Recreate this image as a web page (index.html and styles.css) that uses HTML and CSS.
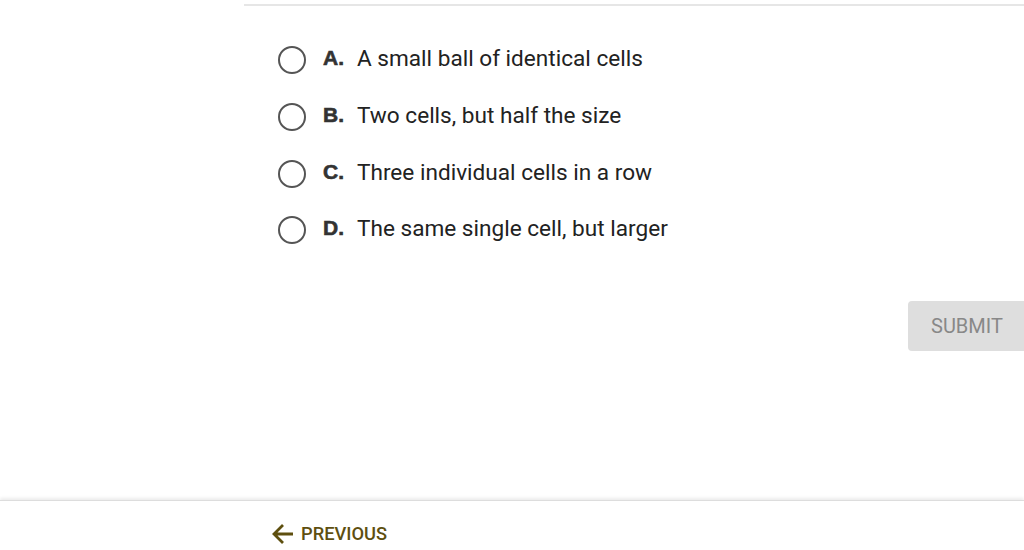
FILE: index.html
```html
<!DOCTYPE html>
<html lang="en">
<head>
    <meta charset="UTF-8">
    <title>Question</title>
    <link rel="stylesheet" href="styles.css">
</head>
<body>
<div class="page">
    <div class="question">
        <div class="rule"></div>
        <ul class="choices">
            <li class="choice"><span class="radio"></span><b class="letter">A.</b><span class="text">A small ball of identical cells</span></li>
            <li class="choice"><span class="radio"></span><b class="letter">B.</b><span class="text">Two cells, but half the size</span></li>
            <li class="choice"><span class="radio"></span><b class="letter">C.</b><span class="text">Three individual cells in a row</span></li>
            <li class="choice"><span class="radio"></span><b class="letter">D.</b><span class="text">The same single cell, but larger</span></li>
        </ul>
        <div class="actions">
            <button class="submit" disabled>SUBMIT</button>
        </div>
    </div>
    <div class="footer">
        <a class="prev" href="#">
            <svg width="24" height="24" viewBox="0 0 24 24"><path d="M22 12H3M12 3l-9 9 9 9" fill="none" stroke="#5e4f0f" stroke-width="2.8"/></svg>
            <span>PREVIOUS</span>
        </a>
    </div>
</div>
</body>
</html>
```

FILE: styles.css
```css
html, body {
    margin: 0;
    padding: 0;
}

body {
    background: #fff;
    font-family: Roboto, "Liberation Sans", Arial, sans-serif;
    color: #222;
}

.page {
    width: 1024px;
    height: 550px;
    display: flex;
    flex-direction: column;
    overflow: hidden;
}

.question {
    height: 500px;
    padding-left: 244px;
    display: flex;
    flex-direction: column;
}

.rule {
    margin-top: 4px;
    height: 2px;
    background: #e6e6e6;
}

.choices {
    list-style: none;
    margin: 40px 0 0 34px;
    padding: 0;
}

.choice {
    display: flex;
    align-items: center;
    height: 28px;
    margin-bottom: 29px;
    font-size: 22.6px;
}

.choice:nth-child(3) {
    margin-bottom: 28px;
}

.choice:last-child {
    margin-bottom: 0;
}

.radio {
    width: 24px;
    height: 24px;
    border: 2.5px solid #555;
    border-radius: 50%;
    flex: none;
}

.letter {
    margin-left: 17px;
    width: 34px;
    padding-bottom: 4px;
    font-family: "Liberation Sans", Arial, sans-serif;
    font-size: 21px;
    font-weight: bold;
    color: #333;
    -webkit-text-stroke: 0.6px #333;
}

.text {
    padding-bottom: 4px;
    color: #222;
}

.actions {
    display: flex;
    justify-content: flex-end;
    margin-top: 57px;
}

.submit {
    width: 126px;
    height: 50px;
    margin-right: -10px;
    border: none;
    border-radius: 4px;
    background: #dedede;
    color: #888;
    font-family: inherit;
    font-size: 20px;
    text-align: left;
    padding-left: 23px;
}

.footer {
    height: 50px;
    box-sizing: border-box;
    border-top: 1px solid #ddd;
    box-shadow: 0 -2px 3px rgba(0, 0, 0, 0.08);
    padding: 16px 0 0 271px;
    display: flex;
    align-items: center;
}

.prev {
    display: flex;
    align-items: center;
    gap: 6px;
    text-decoration: none;
    color: #5e4f0f;
    font-size: 18.3px;
    font-weight: 500;
}
```
